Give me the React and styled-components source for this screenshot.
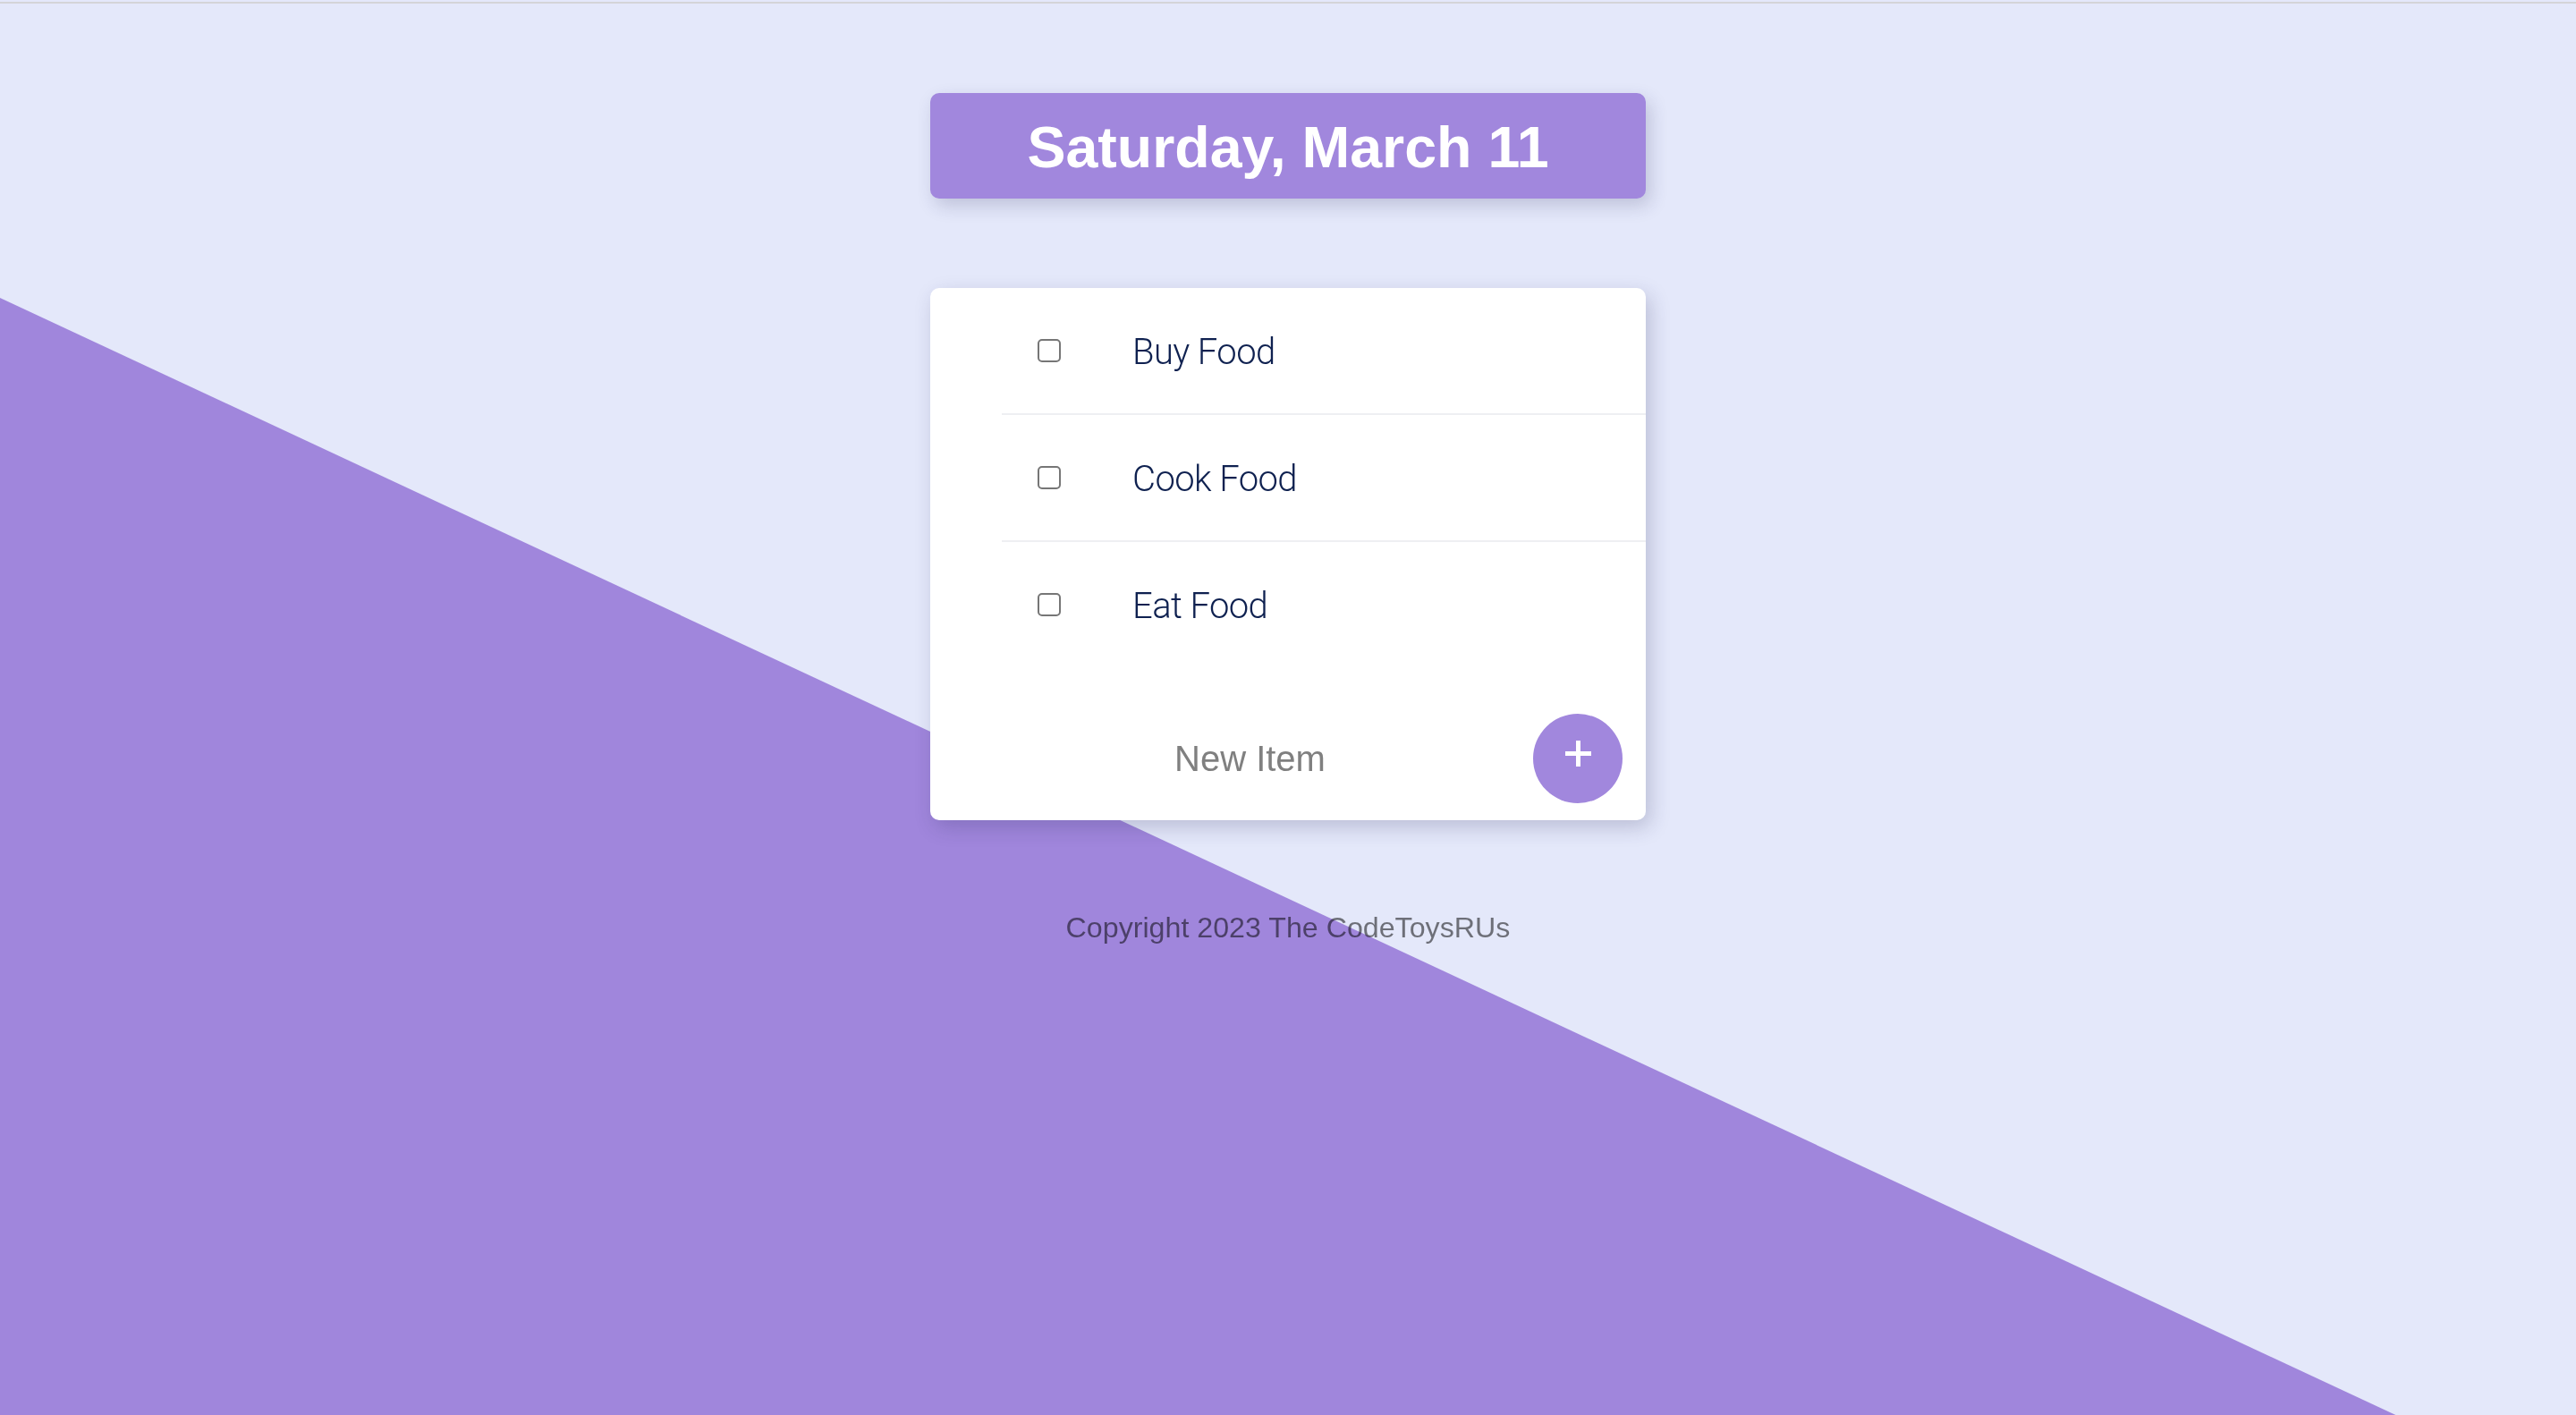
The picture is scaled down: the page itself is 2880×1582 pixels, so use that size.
import React from 'react';
import styled, { createGlobalStyle } from 'styled-components';

// page background: light lilac with a purple diagonal
const GlobalStyle = createGlobalStyle`
  html, body {
    margin: 0;
    padding: 0;
  }
  body {
    background: #e4e8fa;
    font-family: "Liberation Sans", Arial, sans-serif;
    min-height: 100vh;
  }
  body::before {
    content: '';
    position: fixed;
    inset: 0;
    background: #a086dc;
    clip-path: polygon(0 21.05%, 93% 100%, 0 100%);
    z-index: -1;
  }
`;

const TopRule = styled.div`
  height: 2px;
  margin-top: 2px;
  background: #d4d4d8;
`;

const Page = styled.main`
  display: flex;
  flex-direction: column;
  align-items: center;
`;

const Heading = styled.div`
  width: 800px;
  height: 118px;
  margin-top: 100px;
  display: flex;
  align-items: center;
  justify-content: center;
  background: #a187dd;
  border-radius: 10px;
  box-shadow: 5px 8px 20px rgba(40, 40, 90, 0.2);
`;

const HeadingText = styled.h1`
  margin: 3px 0 0;
  color: #fff;
  font-size: 64.5px;
  font-weight: 700;
`;

// 待办卡片
const Card = styled.section`
  width: 800px;
  margin-top: 100px;
  background: #fff;
  border-radius: 10px;
  box-shadow: 5px 8px 22px rgba(40, 40, 90, 0.22);
  overflow: hidden;
`;

const Row = styled.label`
  display: flex;
  align-items: center;
  height: 140px;
  margin-left: 80px;
  padding-left: 40px;
  border-bottom: ${(p) => (p.$last ? 'none' : '2px solid #eeeff2')};
  cursor: pointer;
`;

const Check = styled.input.attrs({ type: 'checkbox' })`
  appearance: none;
  width: 26px;
  height: 26px;
  margin: 0 80px 0 0;
  border: 2.5px solid #767676;
  border-radius: 5px;
  background: #fff;
  box-sizing: border-box;
`;

const ItemText = styled.span`
  padding-top: 3px;
  font-family: Roboto, "Liberation Sans", sans-serif;
  font-size: 40px;
  font-weight: 300;
  letter-spacing: -0.6px;
  color: #0f2150;
`;

const Form = styled.form`
  display: flex;
  align-items: flex-end;
  height: 171px;
  padding: 0 26px 19px 0;
  box-sizing: border-box;
`;

const Field = styled.div`
  flex: 1;
  display: flex;
  align-items: center;
  height: 100px;
`;

const Input = styled.input`
  width: 100%;
  border: none;
  outline: none;
  padding: 0 0 0 273px;
  font-family: "Liberation Sans", Arial, sans-serif;
  font-size: 40px;
  background: transparent;
  color: #333;

  &::placeholder {
    color: #808080;
  }
`;

const AddButton = styled.button`
  width: 100px;
  height: 100px;
  border: none;
  border-radius: 50%;
  background: #a187dd;
  display: flex;
  align-items: center;
  justify-content: center;
  padding: 0 0 12px 0;
  cursor: pointer;
`;

const Footer = styled.footer`
  margin-top: 102px;
  font-size: 32.2px;
  color: rgba(0, 0, 0, 0.52);
`;

const items = ['Buy Food', 'Cook Food', 'Eat Food'];

const App = () => {
  return (
    <>
      <GlobalStyle />
      <TopRule />
      <Page>
        <Heading>
          <HeadingText>Saturday, March 11</HeadingText>
        </Heading>

        <Card>
          {items.map((item, i) => (
            <Row key={item} $last={i === items.length - 1}>
              <Check />
              <ItemText>{item}</ItemText>
            </Row>
          ))}
          <Form onSubmit={(e) => e.preventDefault()}>
            <Field>
              <Input type="text" placeholder="New Item" />
            </Field>
            <AddButton type="submit" aria-label="add">
              <svg width="31" height="31" viewBox="0 0 31 31">
                <path d="M15.5 1v29M1 15.5h29" stroke="#fff" strokeWidth="5" />
              </svg>
            </AddButton>
          </Form>
        </Card>

        <Footer>Copyright 2023 The CodeToysRUs</Footer>
      </Page>
    </>
  );
};

export default App;
